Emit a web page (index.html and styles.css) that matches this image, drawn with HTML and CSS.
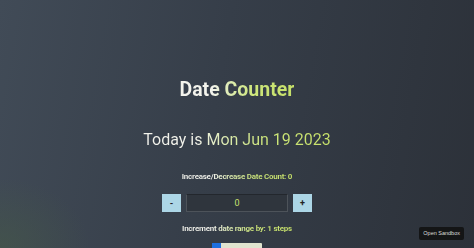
FILE: index.html
```html
<!DOCTYPE html>
<html lang="en">
<head>
    <meta charset="UTF-8">
    <title>Date Counter</title>
    <link rel="stylesheet" href="styles.css">
</head>
<body>
<div class="app">
    <h1 class="grad title">Date Counter</h1>
    <p class="grad today">Today is Mon Jun 19 2023</p>

    <p class="grad label">Increase/Decrease Date Count: 0</p>
    <div class="counter">
        <button class="btn">-</button>
        <input class="count" type="text" value="0">
        <button class="btn">+</button>
    </div>

    <p class="grad label label-2">Increment date range by: 1 steps</p>
    <input class="range" type="range" min="1" max="10" value="1">
</div>

<a class="sandbox">Open Sandbox</a>
</body>
</html>
```

FILE: styles.css
```css
*{margin: 0;padding: 0;box-sizing: border-box;}
html,body{height: 100%;overflow: hidden;}
body{
    font-family: Roboto, "Liberation Sans", sans-serif;
    background:
        radial-gradient(ellipse 90px 70px at 0 248px, rgba(70,90,70,0.55), rgba(70,90,70,0) 100%),
        linear-gradient(100deg, #414b57 0%, #363e49 45%, #2c3139 100%);
    color: #eee;
}
.app{display: flex;flex-direction: column;align-items: center;padding-top: 78px;}

.grad{
    display: inline-block;
    background: linear-gradient(90deg, #f3f3ec 0%, #f3f3ec 28%, #dcebad 45%, #cde67a 65%, #c6e069 100%);
    -webkit-background-clip: text;
    background-clip: text;
    color: transparent;
}
.title{font-size: 19.5px;line-height: 24px;font-weight: 700;}
.today{font-size: 16px;line-height: 20px;font-weight: 400;margin-top: 28px;}
.label{font-size: 8px;line-height: 12px;font-weight: 700;margin-top: 21px;letter-spacing: -0.25px;}
.label-2{margin-top: 11px;}

.counter{display: flex;gap: 5px;margin-top: 11px;}
.btn{width: 19px;height: 18px;border: none;background: #acd6e6;color: #222;font-size: 9px;font-weight: 700;font-family: Roboto, sans-serif;}
.count{width: 102px;height: 18px;background: #2f353d;border: 1px solid #4d535a;border-top-color: #23272d;color: #c9e36f;text-align: center;font-size: 9px;font-family: Roboto, sans-serif;outline: none;}

.range{-webkit-appearance: none;appearance: none;width: 50px;height: 6px;margin-top: 8px;background: linear-gradient(90deg, #1d6fe0 0, #1d6fe0 9px, #e0e4cf 9px);border-radius: 1px;}
.range::-webkit-slider-thumb{-webkit-appearance: none;width: 6px;height: 6px;background: #1d6fe0;}

.sandbox{position: fixed;right: 10px;bottom: 8px;background: #141516;color: #ddd;font-size: 5.5px;line-height: 7px;padding: 3px 4px;border-radius: 2px;font-family: "Liberation Sans", sans-serif;}
```
